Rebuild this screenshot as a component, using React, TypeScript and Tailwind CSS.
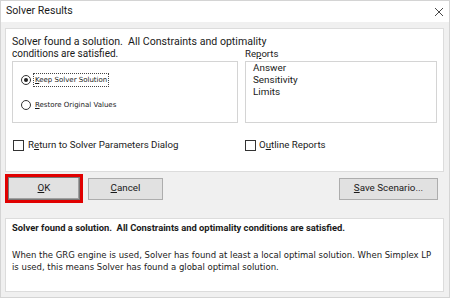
import React from "react";

const ui = { fontFamily: 'Roboto, "Noto Sans", sans-serif' };
const tah = { fontFamily: '"DejaVu Sans", Verdana, sans-serif' };

function U({ children }: { children: React.ReactNode }) {
  return <span className="underline underline-offset-[1px] decoration-[0.5px]">{children}</span>;
}

export default function App() {
  return (
    <div
      className="w-[450px] h-[298px] bg-[#f0f0f0] border border-[#d4d4d4] flex flex-col text-[#1a1a1a] overflow-hidden"
      style={ui}
    >
      {/* title bar */}
      <div className="h-[21px] bg-white flex items-center justify-between pl-[5px] pr-[5px] shrink-0">
        <span className="text-[10.6px] leading-none">Solver Results</span>
        <svg width="10" height="10" viewBox="0 0 10 10">
          <path d="M1 1 L9 9 M9 1 L1 9" stroke="#333" strokeWidth="0.9" />
        </svg>
      </div>

      <div className="flex flex-col pl-[4px] pr-[5px] pt-[6px]">
        {/* upper panel */}
        <div className="h-[144px] bg-white border border-[#dcdcdc] flex flex-col pl-[6px] pr-[5px] pt-[7px] text-[10px] leading-[12px]">
          <div className="text-[10.6px] whitespace-nowrap">Solver found a solution.&nbsp;&nbsp;All Constraints and optimality</div>
          <div className="flex gap-[7px]">
            <div className="w-[226px] flex flex-col">
              <div className="text-[10px]">conditions are satisfied.</div>
              <div className="mt-[1px] h-[62px] border border-[#d4d4d4] flex flex-col pl-[8px] pt-[12px] gap-[13px]" style={tah}>
                <div className="flex items-center h-[12px]">
                  <span className="w-[10px] h-[10px] rounded-full border border-[#333] flex items-center justify-center bg-white">
                    <span className="w-[4px] h-[4px] rounded-full bg-[#222]" />
                  </span>
                  <span className="ml-[2px] px-[1px] border border-dotted border-[#444] text-[7px] leading-[12px]">
                    <U>K</U>eep Solver Solution
                  </span>
                </div>
                <div className="flex items-center h-[12px]">
                  <span className="w-[10px] h-[10px] rounded-full border border-[#333] bg-white" />
                  <span className="ml-[4px] text-[7px] leading-[12px]">
                    <U>R</U>estore Original Values
                  </span>
                </div>
              </div>
            </div>
            <div className="w-[192px] flex flex-col">
              <div className="text-[9.6px]">Re<U>p</U>orts</div>
              <div className="mt-[1px] h-[62px] border border-[#d4d4d4] flex flex-col pl-[7px] text-[9.9px]">
                <span>Answer</span>
                <span>Sensitivity</span>
                <span>Limits</span>
              </div>
            </div>
          </div>
          <div className="flex mt-[16px] text-[9.7px]">
            <div className="w-[233px] flex items-center">
              <span className="ml-[1px] w-[11px] h-[11px] border border-[#333] bg-white" />
              <span className="ml-[4px]">
                R<U>e</U>turn to Solver Parameters Dialog
              </span>
            </div>
            <div className="flex items-center">
              <span className="w-[11px] h-[11px] border border-[#333] bg-white" />
              <span className="ml-[3px]">
                O<U>u</U>tline Reports
              </span>
            </div>
          </div>
        </div>

        {/* buttons */}
        <div className="flex items-center mt-[1px] h-[31px] text-[9.8px]">
          <div className="w-[78px] h-[29px] border-[3px] border-[#e00000] flex items-center justify-center">
            <div className="w-[72px] h-[23px] bg-[#e1e1e1] border border-[#777] shadow-[inset_-1px_-1px_0_#a0a0a0] flex items-center justify-center">
              <U>O</U>K
            </div>
          </div>
          <div className="ml-[5px] w-[75px] h-[22px] bg-[#e1e1e1] border border-[#adadad] flex items-center justify-center">
            <U>C</U>ancel
          </div>
          <div className="ml-auto mr-[6px] w-[99px] h-[22px] bg-[#e1e1e1] border border-[#adadad] flex items-center justify-center">
            <U>S</U>ave Scenario...
          </div>
        </div>

        {/* message panel */}
        <div className="mt-[14px] h-[74px] bg-white border border-[#dcdcdc] pl-[6px] pr-[4px] pt-[3px] leading-[12px]">
          <div className="font-bold text-[9.4px] whitespace-nowrap">Solver found a solution.&nbsp; All Constraints and optimality conditions are satisfied.</div>
          <div className="mt-[15px] text-[8.5px]" style={tah}>
            When the GRG engine is used, Solver has found at least a local optimal solution. When Simplex LP is used, this means Solver has found a global optimal solution.
          </div>
        </div>
      </div>
    </div>
  );
}
